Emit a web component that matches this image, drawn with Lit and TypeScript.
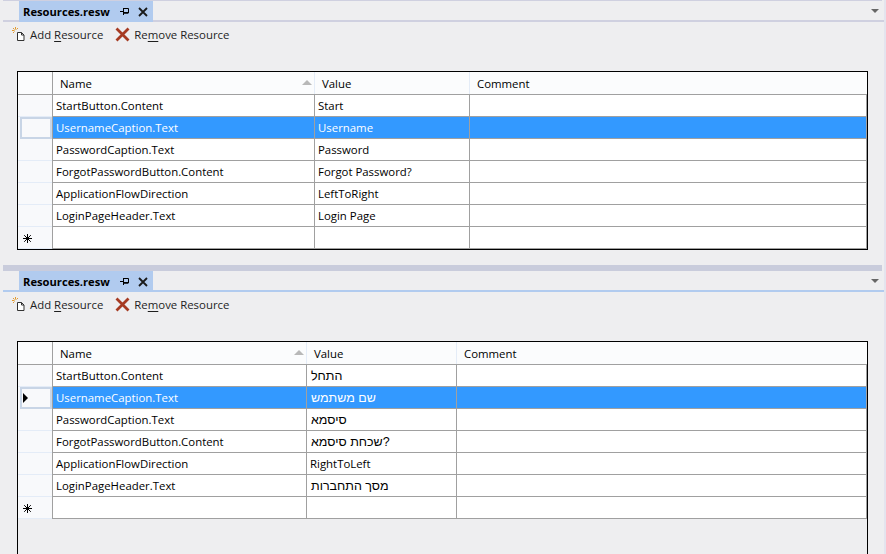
import { LitElement, html, css, svg } from 'lit';
import { customElement, property } from 'lit/decorators.js';

interface Row {
  name: string;
  value: string;
}

const ltrRows: Row[] = [
  { name: 'StartButton.Content', value: 'Start' },
  { name: 'UsernameCaption.Text', value: 'Username' },
  { name: 'PasswordCaption.Text', value: 'Password' },
  { name: 'ForgotPasswordButton.Content', value: 'Forgot Password?' },
  { name: 'ApplicationFlowDirection', value: 'LeftToRight' },
  { name: 'LoginPageHeader.Text', value: 'Login Page' },
];

const rtlRows: Row[] = [
  { name: 'StartButton.Content', value: 'התחל' },
  { name: 'UsernameCaption.Text', value: 'שם משתמש' },
  { name: 'PasswordCaption.Text', value: 'סיסמא' },
  { name: 'ForgotPasswordButton.Content', value: 'שכחת סיסמא?' },
  { name: 'ApplicationFlowDirection', value: 'RightToLeft' },
  { name: 'LoginPageHeader.Text', value: 'מסך התחברות' },
];

const hebrew = /[\u0590-\u05ff]/;

const pinIcon = svg`<svg width="9" height="9" viewBox="0 0 9 9"><path d="M0 4.500h3M3.500 1v7M3.500 1.500h5v4.500h-5" fill="none" stroke="#000" stroke-width="1"/><path d="M4 5h4v1.500h-4z" fill="#000"/></svg>`;
const closeIcon = svg`<svg width="10" height="10" viewBox="0 0 10 10"><path d="M1 1l8 8M9 1l-8 8" stroke="#1a1a1a" stroke-width="1.800"/></svg>`;
const addIcon = svg`<svg width="14" height="14" viewBox="0 0 14 14"><path d="M5.500 5.500h4l2.500 2.500v5.500h-6.500z" fill="#fff" stroke="#333" stroke-width="1"/><path d="M9.500 5.500v2.500h2.500" fill="none" stroke="#333" stroke-width="1"/><path d="M3.500 0v2.500M0 3.500h2.500M1 1l1.500 1.500M6 1l-1.500 1.500M1 6l1.500-1.500" stroke="#e39a2d" stroke-width="1"/></svg>`;
const removeIcon = svg`<svg width="15" height="15" viewBox="0 0 15 15"><path d="M1.500 1.500l12 12M13.500 1.500l-12 12" stroke="#a63a22" stroke-width="2.800"/></svg>`;
const newRowIcon = svg`<svg width="9" height="9" viewBox="0 0 9 9"><path d="M4.500 0v9M0 4.500h9M1.200 1.200l6.600 6.600M7.800 1.200l-6.600 6.600" stroke="#000" stroke-width="1"/></svg>`;

@customElement('resource-grid')
class ResourceGrid extends LitElement {
  static styles = css`
    :host {
      display: block;
      flex: var(--grid-grow, 1);
      margin: 0 16px 0 17px;
      border: 1px solid #000;
      border-bottom: var(--grid-end, 0);
      font: 11.4px 'Open Sans', sans-serif;
      color: #000;
    }
    .row {
      display: grid;
      height: 22px;
      box-sizing: border-box;
      border-bottom: 1px solid #a0a0a0;
      border-right: 1px solid #a0a0a0;
      background: #fff;
    }
    .row > div {
      display: flex;
      align-items: center;
      padding-left: 3px;
      border-right: 1px solid #a0a0a0;
      white-space: nowrap;
      overflow: hidden;
    }
    .row > div:last-child {
      border-right: 0;
    }
    .row > div.he {
      padding-left: 4px;
      font: 12.5px 'Liberation Sans', sans-serif;
    }
    .head {
      height: 23px;
      background: #fbfcfd;
      border-right: 0;
    }
    .head > div {
      padding-left: 7px;
      border-right: 1px solid #e4ecf7;
      justify-content: space-between;
    }
    .head > div:first-child {
      border-right: 1px solid #a0a0a0;
    }
    .row .gutter {
      background: #f8f9fb;
      padding-left: 5px;
      margin-bottom: -1px;
      box-shadow: inset 0 -1px 0 #e4ecf7;
    }
    .row.selected {
      background: #3399ff;
      color: #fff;
    }
    .row.selected .gutter {
      color: #000;
      border-left: 2px solid #f8f9fb;
      box-shadow: inset 0 0 0 2px #c8d5e6;
      padding-left: 3px;
    }
    .sort {
      width: 0;
      height: 0;
      margin: 0 2px 1px 0;
      border-left: 5px solid transparent;
      border-right: 5px solid transparent;
      border-bottom: 5px solid #b8b8b8;
    }
    .marker {
      width: 0;
      height: 0;
      border-top: 5px solid transparent;
      border-bottom: 5px solid transparent;
      border-left: 5px solid #000;
    }
  `;

  @property({ type: Array }) rows: Row[] = [];
  @property() columns = '';
  @property({ type: Boolean }) marker = false;

  render() {
    const cols = `grid-template-columns:${this.columns}`;
    return html`
      <div class="row head" style=${cols}>
        <div></div>
        <div>Name<span class="sort"></span></div>
        <div>Value</div>
        <div>Comment</div>
      </div>
      ${this.rows.map(
        (row, i) => html`
          <div class="row ${i === 1 ? 'selected' : ''}" style=${cols}>
            <div class="gutter">${i === 1 && this.marker ? html`<span class="marker"></span>` : ''}</div>
            <div>${row.name}</div>
            <div class=${hebrew.test(row.value) ? 'he' : ''}>${row.value}</div>
            <div></div>
          </div>
        `
      )}
      <div class="row" style=${cols}>
        <div class="gutter">${newRowIcon}</div>
        <div></div>
        <div></div>
        <div></div>
      </div>
    `;
  }
}

@customElement('resource-pane')
class ResourcePane extends LitElement {
  static styles = css`
    :host {
      display: flex;
      flex-direction: column;
      font: 11.4px 'Open Sans', sans-serif;
      color: #1e1e1e;
    }
    .tabs {
      display: flex;
      justify-content: space-between;
      height: 19px;
      margin-left: 3px;
      padding: 0 5px 0 16px;
      border-bottom: 2px solid var(--tab-line);
    }
    .tab {
      display: flex;
      align-items: center;
      width: 134px;
      height: 21px;
      box-sizing: border-box;
      padding-left: 4px;
      background: #b1cbef;
      font-size: 11.2px;
      font-weight: 700;
      color: #000;
    }
    .tab .pin {
      display: flex;
      margin-left: 10px;
    }
    .tab .close {
      display: flex;
      margin-left: 9px;
    }
    .menu {
      align-self: center;
      width: 0;
      height: 0;
      border-left: 4px solid transparent;
      border-right: 4px solid transparent;
      border-top: 4px solid #666;
    }
    .toolbar {
      display: flex;
      align-items: center;
      height: 24px;
      padding-left: 12px;
    }
    .tool {
      display: flex;
      align-items: center;
      gap: 4px;
      margin-right: 12px;
    }
    .tool svg {
      display: block;
    }
    u {
      text-underline-offset: 2px;
    }
    .spacer {
      height: 25px;
    }
  `;

  @property({ type: Array }) rows: Row[] = [];
  @property() columns = '';
  @property({ type: Boolean }) marker = false;

  render() {
    return html`
      <div class="tabs">
        <div class="tab">
          Resources.resw<span class="pin">${pinIcon}</span><span class="close">${closeIcon}</span>
        </div>
        <span class="menu"></span>
      </div>
      <div class="toolbar">
        <span class="tool">${addIcon}<span>Add <u>R</u>esource</span></span>
        <span class="tool">${removeIcon}<span>Re<u>m</u>ove Resource</span></span>
      </div>
      <div class="spacer"></div>
      <resource-grid .rows=${this.rows} .columns=${this.columns} ?marker=${this.marker}></resource-grid>
    `;
  }
}

@customElement('app-root')
export class AppRoot extends LitElement {
  static styles = css`
    :host {
      display: flex;
      flex-direction: column;
      box-sizing: border-box;
      width: 886px;
      height: 554px;
      overflow: hidden;
      background: #eeeef0;
      border-right: 2px solid #e4e4ee;
    }
    .edge {
      flex: none;
      height: 1px;
      margin: 0 2px 0 3px;
      background: #cfd0e0;
    }
    .top {
      --tab-line: #cfd0e0;
      --grid-grow: none;
      --grid-end: 1px solid #000;
      flex: none;
      height: 264px;
    }
    .splitter {
      flex: none;
      height: 6px;
      margin: 0 2px 0 3px;
      background: #c9ccdc;
    }
    .bottom {
      --tab-line: #b1cbef;
      flex: 1;
    }
  `;

  render() {
    return html`
      <div class="edge"></div>
      <resource-pane class="top" .rows=${ltrRows} .columns=${'35px 262px 155px 1fr'}></resource-pane>
      <div class="splitter"></div>
      <resource-pane class="bottom" .rows=${rtlRows} .columns=${'35px 254px 150px 1fr'} marker></resource-pane>
    `;
  }
}
